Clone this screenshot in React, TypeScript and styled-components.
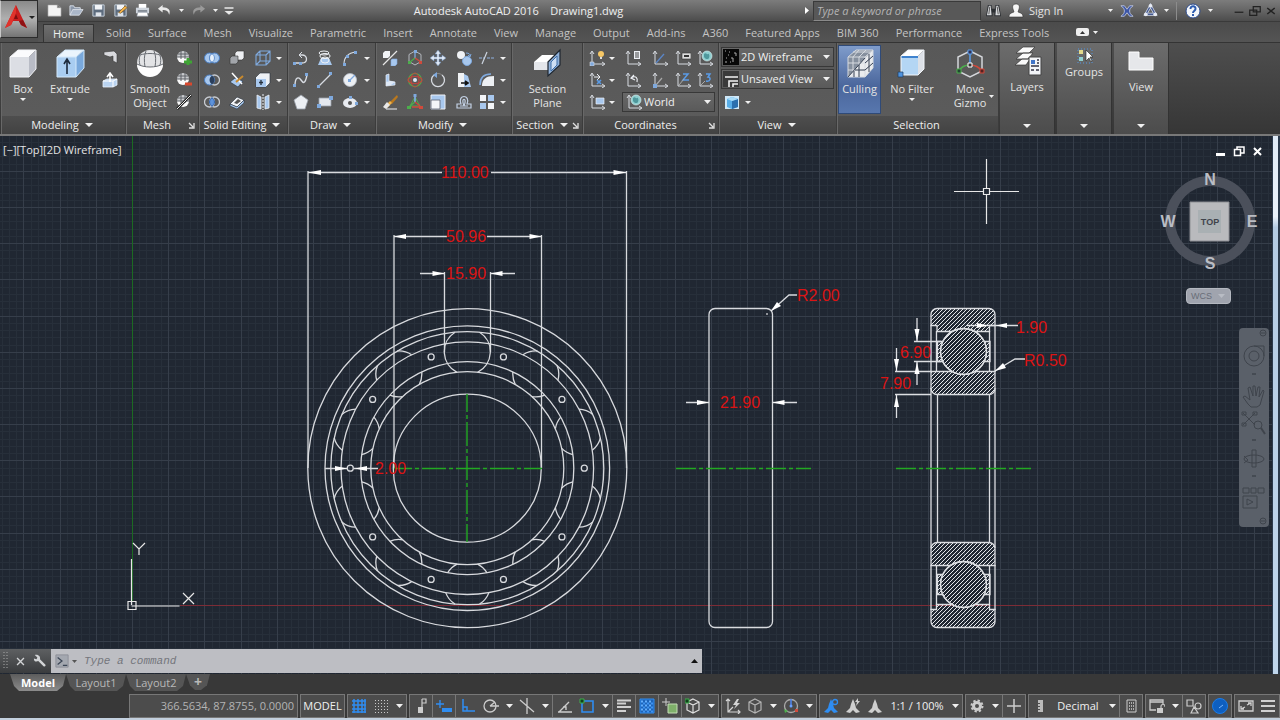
import React from "react";
import styled, { createGlobalStyle, css } from "styled-components";

const uiFont = `"Open Sans", "Noto Sans", sans-serif`;

const GlobalStyle = createGlobalStyle`
  *, *::before, *::after { box-sizing: border-box; }
  html, body { margin: 0; padding: 0; background: #383838; }
  body { font-family: ${uiFont}; font-size: 11px; line-height: 14px; color: #e4e4e4; }
  button, input, select { font: inherit; color: inherit; margin: 0; padding: 0; }
  button { background: none; border: 0; cursor: default; }
  svg { display: block; }
`;

/* ---------- icons ---------- */

const W = "#eef1f6";
const B = "#a8c8ee";
const S = "#7fa9dd";
const D = "#26303c";

const axes = <path d="M3 2v12h12M1 4l2-3 2 3M13 12l3 2-3 2" fill="none" stroke="#d8dce2" strokeWidth="1" />;
const mesh = (
  <>
    <path d="M1 7a6 6 0 0112 0z" fill="#c9cbce" />
    <path d="M1 7a6 6 0 0012 0z" fill="#fafafa" />
    <path d="M1 7h12M2 4h10M5 1v8M9 1v8" stroke="#5c6066" strokeWidth="1" fill="none" />
  </>
);
const person = <path d="M8 1l2 5 1 4 4 4-4 1-3-3-3 3-4-1 4-4 1-4z" fill="currentColor" />;

const art: Record<string, React.ReactNode> = {
  new: <path d="M1 2h10l4 3v9H1zM11 2v3h4" fill="#f4f4f4" stroke="#999" strokeWidth=".6" />,
  open: <><path d="M1 13V3h4l1 2h6v2" fill="#8a96a8" stroke="#d8dee8" /><path d="M1 13l3-6h11l-4 6z" fill="#aab6c8" stroke="#e6eaf0" strokeWidth=".8" /></>,
  save: <><path d="M2 2h12v12H2z" fill="#5d6c7e" stroke="#c9d2dd" /><path d="M4 2h8v5H4z" fill="#f2f4f7" /><path d="M5 10h6v4H5z" fill="#dfe4ea" /></>,
  saveas: <><path d="M2 2h12v12H2z" fill="#5d6c7e" stroke="#c9d2dd" /><path d="M4 2h8v5H4z" fill="#f2f4f7" /><path d="M5 10h6v4H5z" fill="#dfe4ea" /><path d="M6 10l7-7 2 2-7 6z" fill="#f3b24a" stroke="#6a4a14" strokeWidth=".6" /></>,
  plot: <><path d="M4 1h8v5H4z" fill="#fff" /><path d="M1 5h14v6H1z" fill="#cfd5dd" /><path d="M3 8h10v1H3z" fill="#39424e" /><path d="M3 10h10l1 4H2z" fill="#fff" stroke="#8c96a2" strokeWidth=".6" /></>,
  undo: <path d="M6 2L1 6l5 4V7.500c4 0 6 1 7 5 2-5-1-8-7-8z" fill="#e9e9e9" />,
  redo: <path d="M10 2l5 4-5 4V7.500c-4 0-6 1-7 5-2-5 1-8 7-8z" fill="#9a9a9a" />,
  custom: <path d="M2 3h12v2H2zM2 8h12l-6 5z" fill="#e9e9e9" />,
  binoc: <><path d="M2 2h4v4h4V2h4l2 12H9v-4H7v4H0z" fill="#2c2f33" /><path d="M3 3h2l1 10H1zM11 3h2l2 10h-5z" fill="#d8dadd" /><path d="M4 4l-1 8M12 4l1 8" stroke="#555" /></>,
  user: <path d="M8 1c3 0 4 2 3 5l-1 3c2 1 5 1 5 5H1c0-4 3-4 5-5L5 6C4 3 5 1 8 1z" fill="#f6f6f6" stroke="#333" strokeWidth=".6" />,
  exchange: <path d="M1 2h4l3 4 3-4h4c-3 2-4 4-4 6s1 4 4 6h-4l-3-4-3 4H1c3-2 4-4 4-6S4 4 1 2z" fill="#3d56a6" stroke="#c6cfe8" strokeWidth=".9" />,
  a360: <><path d="M8 3l5 9H3z" fill="none" stroke="#cdd6ea" strokeWidth="3" /><path d="M8 3l5 9H3z" fill="none" stroke="#44598f" strokeWidth="1.4" /><circle cx="8" cy="3" r="2" fill="#e7ebf4" /><circle cx="3" cy="12" r="2" fill="#e7ebf4" /><circle cx="13" cy="12" r="2" fill="#e7ebf4" /></>,
  help: <><circle cx="8" cy="8" r="7" fill="#f4f7fb" stroke="#2b4a8c" strokeWidth="1" /><path d="M5.500 6c0-4 5.500-3.500 5 0 0 1.500-2.500 2-2.500 4M8 11v2" fill="none" stroke="#2d5cb0" strokeWidth="2" /></>,
  min: <path d="M1 9h14v2H1z" fill="#222" />,
  restore: <path d="M6 3h8v6H6zM2 7h8v6H2z" fill="none" stroke="#222" strokeWidth="1.400" />,
  close: <path d="M3 4l10 8M13 4L3 12" stroke="#222" strokeWidth="2" />,

  polysolid: <path d="M2 2l10-1 3 3v9l-4-2V6L8 7 2 5z" fill="#d9dade" stroke="#3b3b3b" strokeWidth=".6" />,
  presspull: <><path d="M1 9l4-2h10v6l-4 2H1z" fill="#b9d3f0" stroke="#e9f1fa" strokeWidth=".8" /><path d="M1 9h10v6M11 9l4-2" stroke="#fff" fill="none" /><path d="M8 10V2M5 5l3-4 3 4" stroke="#fff" strokeWidth="1.600" fill="none" /></>,
  meshAdd: <>{mesh}<path d="M12 8v7M8 12h8" stroke="#3fa535" strokeWidth="3" /></>,
  meshSub: <>{mesh}<path d="M9 12h7" stroke="#d8482e" strokeWidth="3" /></>,
  meshNo: <>{mesh}<path d="M1 15L15 1" stroke="#222" strokeWidth="2.500" /><path d="M1 15L15 1" stroke="#eee" strokeWidth="1" /></>,
  union: <><circle cx="5.500" cy="8" r="5" fill={B} stroke="#4b7fc4" /><circle cx="10.500" cy="8" r="5" fill={B} stroke="#4b7fc4" /><path d="M8 3.700a5 5 0 010 8.600a5 5 0 010-8.600" fill="#e6f0fb" stroke="#4b7fc4" strokeWidth=".8" /></>,
  subtract: <><circle cx="10.500" cy="8" r="5" fill="none" stroke="#c8ccd2" strokeWidth="1.300" /><circle cx="5.500" cy="8" r="5" fill={B} stroke="#4b7fc4" /><path d="M8 3.700a5 5 0 010 8.600a5 5 0 010-8.600" fill="#2b3f5c" /></>,
  intersect: <><circle cx="5.500" cy="8" r="5" fill="none" stroke="#c8ccd2" strokeWidth="1.300" /><circle cx="10.500" cy="8" r="5" fill="none" stroke="#c8ccd2" strokeWidth="1.300" /><path d="M8 3.700a5 5 0 010 8.600a5 5 0 010-8.600" fill="#5e93db" stroke="#2e5fa8" /></>,
  interfere: <><path d="M6 3l2-2h7v7l-2 2H6z" fill="#eef0f3" stroke="#333" strokeWidth=".6" /><path d="M1 8l2-2h6v6l-2 2H1z" fill="#a2a5aa" stroke="#333" strokeWidth=".6" /></>,
  slice: <><path d="M1 10l5-4 8 3-5 6z" fill={B} stroke={D} strokeWidth=".6" /><path d="M3 1l10 11" stroke="#fff" strokeWidth="1.500" /><path d="M14 4L7 10" stroke="#c98a2d" strokeWidth="2" /></>,
  thicken: <><path d="M1 10l7-7 7 3-7 7z" fill="#f2f4f7" stroke={D} strokeWidth=".6" /><path d="M1 10l7 3 7-7v3l-7 6-7-3z" fill={B} stroke={D} strokeWidth=".6" /><path d="M5 9l4-4 3 2-4 3z" fill="#555" /></>,
  extractEdges: <path d="M1 5h10v10H1zM5 1h10v10H5zM1 5l4-4M11 5l4-4M1 15l4-4M11 15l4-4" fill="none" stroke={S} strokeWidth="1.100" />,
  extrudeFace: <><path d="M1 5l4-4h10v10l-4 4H1z" fill="#eef1f5" stroke={D} strokeWidth=".6" /><path d="M1 5h10v10H1z" fill={B} /><path d="M1 6h10" stroke="#fff" strokeWidth="1.500" /><path d="M6 8v5M4 10.500h4" stroke={D} strokeWidth="1.300" /></>,
  separate: <><path d="M2 1l4 2v12l-4-1zM14 1l-4 2v12l4-1z" fill={B} stroke={W} strokeWidth=".8" /><path d="M8 0v16" stroke={W} strokeDasharray="2 1" /></>,
  pline: <><path d="M2 13h7c6 0 6-8 0-8H7" fill="none" stroke="#d8dce2" strokeWidth="1.300" /><path d="M9 2L6 5l3 3" fill="none" stroke="#d8dce2" /><path d="M0 12h3v3H0zM6 12h3v3H6z" fill={S} /></>,
  spiral: <><path d="M1 15l3-7h8l3 7z" fill={B} /><ellipse cx="7" cy="3" rx="5" ry="2" fill="none" stroke={W} /><ellipse cx="8" cy="6" rx="5" ry="2.500" fill="none" stroke={W} /><ellipse cx="8" cy="10" rx="4" ry="3" fill="none" stroke={W} /></>,
  arc: <><path d="M2 14C2 7 6 3 14 2" fill="none" stroke="#d8dce2" strokeWidth="1.200" /><path d="M1 13h3v3H1zM4 5h3v3H4zM12 1h3v3h-3z" fill={S} /></>,
  spline: <><path d="M2 14C2 4 6 5 8 8s4 5 6-5" fill="none" stroke="#d8dce2" strokeWidth="1.400" /><path d="M0 12h3v3H0zM12 1h3v3h-3z" fill={S} /></>,
  line: <><path d="M2 14L14 2" stroke="#d8dce2" strokeWidth="1.200" /><path d="M0 13h3v3H0zM12 0h3v3h-3z" fill={S} /></>,
  circle: <><circle cx="8" cy="8" r="6.500" fill="#eceff3" stroke="#b8bec8" strokeWidth=".8" /><path d="M8 8l5-5" stroke={S} strokeWidth="1.200" /><path d="M6 7h3v3H6z" fill={S} /></>,
  polygon: <path d="M8 1l7 5-3 9H4L1 6z" fill="#eceff3" stroke="#9aa1ab" strokeWidth=".8" />,
  rect: <><path d="M2 4h12v8H2z" fill="#e4e8ee" stroke="#9aa1ab" strokeWidth=".8" /><path d="M0 10h4v4H0zM12 2h4v4h-4z" fill={S} /></>,
  ellipse: <><ellipse cx="8" cy="9" rx="7" ry="5" fill="#e8ebf0" /><circle cx="8" cy="9" r="2" fill="#555" /><path d="M7 2h3v3H7zM13 8h3v3h-3z" fill={S} /></>,
  convert: <><path d="M1 15L15 1" stroke="#e6e6e6" strokeWidth="1.200" /><path d="M1 3l2-2h5v5L6 8H1z" fill="#f2f4f7" /><path d="M9 10l1-1h5v5l-2 2H9z" fill={B} stroke={S} strokeWidth=".6" /></>,
  gizmo: <><path d="M8 1l6 3.500v7L8 15l-6-3.500v-7z" fill="none" stroke="#b4b8be" strokeWidth="1" /><path d="M8 8V2" stroke={S} strokeWidth="1.300" /><path d="M8 8l-5 4" stroke="#4cae4c" strokeWidth="1.300" /><path d="M8 8l6 4" stroke="#d04a3c" strokeWidth="1.500" /><path d="M7 0h3v3H7z" fill={S} /><path d="M1 11h3v3H1z" fill="#4cae4c" /><path d="M12 11h3v3h-3z" fill="#d04a3c" /></>,
  move: <path d="M8 0l3 4H9v3h3V5l4 3-4 3V9H9v3h2l-3 4-3-4h2V9H4v2L0 8l4-3v2h3V4H5z" fill="#dfe9f6" stroke="#6e8fb8" strokeWidth=".5" />,
  copy: <><circle cx="5" cy="5" r="4" fill="#f0f2f5" /><circle cx="11" cy="11" r="4.500" fill={B} stroke={S} /><path d="M10 3c3 0 4 1 4 3M12 5l2 2 1-3" stroke={S} fill="none" /></>,
  trim: <><path d="M0 8h6M8 8h8" stroke="#8fb2e0" strokeWidth="1.200" strokeDasharray="3 1" /><path d="M3 14L8 2" stroke="#cdd5e0" strokeWidth="1.200" /></>,
  solidL: <><path d="M4 3l3-1v7l6 1v3l-9 1z" fill={B} stroke={W} strokeWidth=".7" /><path d="M4 10l4-1 5 1-4 3-5 1z" fill="#dfe9f6" /></>,
  rotate3d: <><circle cx="8" cy="8" r="6.500" fill="none" stroke="#4cae4c" strokeWidth="1.200" /><ellipse cx="8" cy="8" rx="7" ry="3.500" fill="none" stroke="#c4473c" strokeWidth="1.200" /><ellipse cx="8" cy="8" rx="4" ry="7" fill="none" stroke="#c4473c" strokeWidth="1" /><circle cx="8" cy="8" r="2" fill="#dfe9f6" /></>,
  rotate: <><path d="M4 3a6.500 6.500 0 108 0" fill="none" stroke="#d8dce2" strokeWidth="1.300" /><path d="M4 3a6 6 0 018 0" fill="none" stroke="#888" /><path d="M7 0L3 3l4 3z" fill={S} /></>,
  mirror: <><path d="M2 1h6v14H2z" fill="#f0f2f5" /><path d="M8 2l4 2 3 11H8z" fill={B} /><path d="M5 11h6M9 9l3 2-3 2" stroke="#111" strokeWidth="1.600" fill="none" /></>,
  fillet: <><path d="M3 14C3 7 7 4 15 4v10z" fill="#eceff3" /><path d="M1 13C1 5 5 2 12 2" fill="none" stroke={S} strokeWidth="1.600" /></>,
  erase: <><path d="M15 1L8 8l2 2 6-7z" fill="#b9781e" /><path d="M8 7l-6 6 3 1 5-5z" fill="#f0b44c" /><path d="M5 8l3 3-4 4-3-2z" fill="#e8e8e8" /><path d="M4 15h11" stroke={W} /></>,
  scale3d: <><path d="M8 3l-5 9h10z" fill="none" stroke="#4cae4c" strokeWidth="1" /><path d="M8 1v7" stroke={S} strokeWidth="1.800" /><path d="M8 8l-5 4" stroke="#4cae4c" strokeWidth="1.500" /><path d="M8 8l5 4M5 13h8" stroke="#d04a3c" strokeWidth="1.300" /><path d="M12 12h4v3h-4z" fill="#d04a3c" /><path d="M0 12h4v3H0z" fill="#4cae4c" /><path d="M6.500 0h3v3h-3z" fill={S} /></>,
  scale: <><path d="M1 1h14v14H1z" fill={B} stroke={W} /><path d="M1 6h9v9H1z" fill="#f5f6f8" stroke="#586170" strokeWidth=".8" /></>,
  offset: <path d="M1 14v-4h4C1 0 15 0 11 10h4v4zM4 12h4C4 3 12 3 8 12h4" fill="none" stroke="#c4d2e6" strokeWidth="1.200" />,
  array: <><path d="M1 1h6v6H1zM9 9h6v6H9z" fill="#f3f5f8" /><path d="M9 1h6v6H9zM1 9h6v6H1z" fill={B} /></>,

  ucs: <>{axes}<path d="M1 12h4v4H1z" fill={S} stroke="#d8dce2" strokeWidth=".6" /><circle cx="12" cy="4" r="3" fill="#f6c765" /><path d="M11 7h2v2h-2z" fill="#ddd" /></>,
  ucsX: <>{axes}<path d="M5 5h5M8 2l3 3-3 3" stroke={W} fill="none" /><path d="M8 8l4 4M12 8l-4 4" stroke="#5a9be6" strokeWidth="1.600" /></>,
  ucsView: <>{axes}<path d="M7 4h8v6H7z" fill={B} stroke={W} strokeWidth=".7" /></>,
  ucsNamed: <>{axes}<path d="M9 1h6v8H9z" fill={W} /><path d="M10 3h4M10 5h4M10 7h4" stroke="#444" /></>,
  ucsPrev: <>{axes}<path d="M6 6c5-3 7 0 6 4M9 3L6 6l4 2" stroke={W} fill="none" strokeWidth="1.200" /></>,
  ucsOrigin: <>{axes}<path d="M4 13l8-9" stroke="#5a86c8" strokeWidth="1.300" /></>,
  ucsObj: <>{axes}<path d="M4 13l6-7" stroke="#aaa" strokeWidth="1.200" /><path d="M1 12h4v4H1z" fill={S} /></>,
  ucsFace: <>{axes}<path d="M7 3h9v6H7z" fill="#ddd" stroke="#333" strokeWidth=".6" /><path d="M9 6h5" stroke="#333" strokeWidth="2" /></>,
  ucsZ: <>{axes}<path d="M8 2h5L8 8h6" stroke="#5a9be6" fill="none" strokeWidth="1.500" /><path d="M4 13l5-6" stroke="#aaa" /></>,
  world: <>{axes}<circle cx="10" cy="6" r="5" fill="#8fcfd0" stroke="#dff2f2" strokeWidth=".6" /><path d="M7 4c2-2 3 1 4 0s2 2 1 4-4 1-5-1z" fill="#4f989c" /></>,
  ucs3: <>{axes}<path d="M9 2h4l-2 3c3 0 3 5-2 4" stroke="#5a9be6" fill="none" strokeWidth="1.500" /><path d="M4 13l4-4" stroke="#aaa" /></>,
  wire: <><path d="M0 0h16v16H0z" fill="#080808" /><path d="M2 2h1M6 3h1M5 6h1M3 9h1M8 9h2v4M11 4h2v3M2 13h2M7 13h1" stroke="#aaa" fill="none" /></>,
  viewIco: <><path d="M0 0h16v16H0z" fill="#3a3a3a" /><path d="M2 6h13M6 16v-6h9M10 16v-3h5" stroke="#f2f2f2" strokeWidth="1.600" fill="none" /></>,
  viewCube: <><path d="M1 2h14v13H1z" fill="#cfe8f8" /><path d="M3 5l5-2 6 2v8l-6 2-5-2z" fill="#58aee8" /><path d="M8 7l6-2v8l-6 2z" fill="#2b6fae" /><path d="M3 5l5 2 6-2-6-2z" fill="#a9dcf8" /></>,

  dgrid: <path d="M3 1v14M7 1v14M11 1v14M14 1v14M1 3h14M1 7h14M1 11h14M1 14h14" stroke="#2f8df2" strokeWidth="1.500" />,
  dots: <path d="M2 2.500h13M2 5.500h13M2 8.500h13M2 11.500h13M2 14.500h13" stroke="#c9c9c9" strokeWidth="1" strokeDasharray="1 2" />,
  infer: <><path d="M9 1h4v4H9V1v8" fill="none" stroke="#ccc" strokeWidth="1.200" /><path d="M5 9h5v6H5z" fill="#ccc" /></>,
  dyn: <><path d="M4 2v8M0 6h8" stroke="#2f8df2" strokeWidth="1.400" /><path d="M6 10h10v4H6z" fill="#2f8df2" /></>,
  ortho: <path d="M3 1v12h12M3 9h4v4" fill="none" stroke="#2f8df2" strokeWidth="1.500" />,
  polar: <><circle cx="7" cy="8" r="6" fill="none" stroke="#ccc" strokeWidth="1.300" /><path d="M7 8h9M7 8l5-4" stroke="#ccc" strokeWidth="1.300" /></>,
  iso: <path d="M1 2l14 12M8 0v16M1 2l7 6" stroke="#ccc" strokeWidth="1.300" />,
  otrack: <path d="M1 14h14M2 14L12 4M6 9h3v3" stroke="#ccc" strokeWidth="1.400" fill="none" />,
  osnap: <><path d="M3 3h11v11H3z" fill="none" stroke="#2f8df2" strokeWidth="1.600" /><path d="M1 1h4v4H1z" fill="#12401c" stroke="#3fae4c" /></>,
  lwt: <path d="M1 2.500h14M1 5.500h9M1 9h14M1 13h9" stroke="#d0d0d0" strokeWidth="2" />,
  transp: <><path d="M1 1h14v14H1z" fill="#1d63b8" stroke="#2f8df2" /><path d="M2 3.500h12M2 7.500h12M2 11.500h12" stroke="#63aefc" strokeDasharray="2 2" strokeWidth="2" /><path d="M4 5.500h10M4 9.500h10M4 13.500h10" stroke="#3f93f0" strokeDasharray="2 2" strokeWidth="2" /></>,
  cycle: <><path d="M6 6h9v9H6z" fill="#7fb06a" stroke="#c4dcb6" /><path d="M4 0v8M0 4h8" stroke="#ccc" /></>,
  cube: <path d="M8 1l6 3v8l-6 3-6-3V4zM2 4l6 3 6-3M8 7v8" fill="none" stroke="#b4b4b4" strokeWidth="1.200" />,
  cubeSnap: <><path d="M8 1l6 3v8l-6 3-6-3V4zM2 4l6 3 6-3M8 7v8" fill="none" stroke="#e0e0e0" strokeWidth="1.200" /><path d="M0 1h4v4H0z" fill="#12401c" stroke="#3fae4c" /></>,
  dynUcs: <><path d="M3 1v13h12M1 3l2-2 2 2M13 12l2 2-2 2M3 14l5-5" fill="none" stroke="#d4d4d4" strokeWidth="1.200" /><path d="M12 1L8 7h3l-2 4 6-6h-3l2-4z" fill="#d4d4d4" /></>,
  gizmoS: <><circle cx="8" cy="8" r="6.500" fill="none" stroke="#aaa" strokeWidth="1.300" /><path d="M8 1v7" stroke="#4f83e8" strokeWidth="1.600" /><circle cx="8" cy="8" r="1.500" fill="#6aa0ff" /><path d="M1 11l4 2-3 2z" fill="#4cae4c" /><path d="M12 11h3v3h-3z" fill="#d04a3c" /></>,
  person: person,
  personB: <>{person}<circle cx="12" cy="4" r="2.500" fill="none" stroke="currentColor" strokeWidth="1.300" /></>,
  personF: <>{person}<path d="M13 0l-3 4h2l-1 4 4-5h-2z" fill="currentColor" /></>,
  gear: <><circle cx="8" cy="8" r="5.500" fill="none" stroke="#ccc" strokeWidth="2" strokeDasharray="2.300 2" /><circle cx="8" cy="8" r="3.500" fill="none" stroke="#ccc" strokeWidth="3" /></>,
  plus: <path d="M8 1v14M1 8h14" stroke="#ccc" strokeWidth="1.500" />,
  ruler: <path d="M6 2h5v12H6v-2h2v-1H6V9h2V8H6V6h2V5H6z" fill="#bbb" />,
  calc: <><path d="M4 2h9v12H4z" fill="none" stroke="#ccc" /><path d="M6 5h6M6 8h6M6 11h6" stroke="#ccc" strokeDasharray="1 1" strokeWidth="1.500" /></>,
  lock: <><path d="M7 12H1V2h13v4M1 4h13" fill="none" stroke="#ccc" strokeWidth="1.300" /><path d="M8 10h6v5H8z" fill="#ccc" /><path d="M12 10V8c0-2 4-2 4 0v1" stroke="#ccc" fill="none" strokeWidth="1.200" /></>,
  shapes: <><path d="M1 2h6v6H1zM5 15l3-6 4 6z" fill="none" stroke="#ccc" strokeWidth="1.200" /><circle cx="12" cy="8" r="3" fill="none" stroke="#ccc" strokeWidth="1.200" /></>,
  perf: <><circle cx="8" cy="8" r="7.500" fill="#0e5fc0" stroke="#1b7ce8" /><path d="M7 10l4-3" stroke="#7ab8ff" /></>,
  full: <path d="M1 3h14v10H1zM9 7l4-2M13 8V5h-3M7 9l-4 2M3 8v3h3" fill="none" stroke="#d0d0d0" strokeWidth="1.300" />,
  burger: <path d="M1 3h14M1 8h14M1 13h14" stroke="#d0d0d0" strokeWidth="1.800" />,
  wrench: <path d="M2 1l3 3-1 2-3-1c0 4 3 4 5 3l6 6c2 1 3-1 2-2L8 6c1-4-3-6-6-5z" fill="#d2d4d6" />,
  x: <path d="M3 3l10 10M13 3L3 13" stroke="#d2d4d6" strokeWidth="2" />,
  prompt: <><path d="M1 1h14v14H1z" fill="#a4a8b0" stroke="#8a8e96" /><path d="M3 4l5 4-5 4M9 13h5" fill="none" stroke="#3c4656" strokeWidth="1.400" /></>,
};

const Icon = ({ name, size = 16 }: { name: string; size?: number }) => (
  <svg width={size} height={size} viewBox="0 0 16 16" aria-hidden="true">{art[name]}</svg>
);

const Tri = ({ size = 7, color = "#f0f0f0" }: { size?: number; color?: string }) => (
  <svg width={size} height={Math.ceil(size / 2)} viewBox="0 0 8 4" preserveAspectRatio="none" aria-hidden="true">
    <path d="M0 0h8L4 4z" fill={color} />
  </svg>
);

const Launcher = () => (
  <svg width="8" height="8" viewBox="0 0 8 8" aria-hidden="true">
    <path d="M2 2l4 4M7 2v5H2" fill="none" stroke="#e0e0e0" strokeWidth="1.300" />
  </svg>
);

const bigArt: Record<string, React.ReactNode> = {
  box: <><path d="M2 9l8-7h18l-7 7z" fill="#fbfbfd" /><path d="M2 9h19v20H2z" fill="#dcdee4" /><path d="M21 9l7-7v19l-7 8z" fill="#b9bcc6" /><path d="M2 9l8-7h18v19l-7 8H2z" fill="none" stroke="#f2f3f6" /></>,
  extrude: <><path d="M2 9l8-7h19l-8 7z" fill="#eaf4fd" /><path d="M2 9h19v20H2z" fill="#a9cdf1" /><path d="M21 9l8-7v18l-8 9z" fill="#7aa9dc" /><path d="M2 9l8-7h19v18l-8 9H2zM2 9h19v20M21 9l8-7" fill="none" stroke="#d3e8fa" /><path d="M12 26V13M9 16l3-5 3 5" stroke="#1c2a3c" strokeWidth="1.600" fill="none" /></>,
  sphere: <><circle cx="15" cy="15" r="13" fill="#e2e3e5" /><path d="M2 16c7 4 19 4 26 0a13 13 0 01-26 0" fill="#fdfdfd" /><path d="M5 7c6-2 14-2 20 0M2 16c7 4 19 4 26 0M11 3c-2 4-2 10-1 16M19 3c2 4 2 10 1 16M5 7c-1 4-1 7 0 10M25 7c1 4 1 7 0 10" stroke="#686c72" fill="none" /></>,
  plane: <><path d="M1 14l8-7h14l-8 7z" fill="#fff" /><path d="M1 14h14v8H1z" fill="#e4e6ea" /><path d="M15 14L27 2v15L15 28z" fill="#8fb0d8" stroke="#1e2630" strokeWidth="1.200" /><path d="M18 14l6-6v9l-6 6z" fill="#cfe0f4" stroke="#3e6ea8" /></>,
  culling: <><path d="M3 9l8-7h17v18l-8 9H3z" fill="#86909e" /><path d="M3 29L20 10v19zM20 10l8-8v18l-8 9z" fill="#e9ebee" /><path d="M3 9h17v20M3 9l8-7h17v18l-8 9H3V9M20 9l8-7M3 15h17l8-7M3 22h17l8-7M8 9v20M14 9v20M8 4h18M14 2L8 9M21 2l-7 7" stroke="#d6dae0" fill="none" /><path d="M3 29L20 10M9 23v6M14 17v12M10 22h10M20 15l8-7M20 22l8-7M24 6v18" stroke="#3a4456" fill="none" /></>,
  filter: <><path d="M4 8l7-6h16l-6 6z" fill="#fff" /><path d="M4 8h17v19H4z" fill="#b4d6f4" /><path d="M21 8l6-6v19l-6 6z" fill="#dde1e7" /><path d="M4 9h17" stroke="#3f83cf" strokeWidth="2" /><path d="M4 8l7-6h16v19l-6 6H4z" fill="none" stroke="#f2f6fa" /><path d="M1 24h5v5H1z" fill="#4f93de" stroke="#1e3c60" strokeWidth=".7" /></>,
  gizmo: <><path d="M15 3l12 6v14l-12 6-12-6V9z" fill="none" stroke="#d4d6da" strokeWidth="1.500" /><path d="M15 16V4" stroke="#5a9be6" strokeWidth="1.600" /><path d="M15 17c-5 0-9 2-11 6" stroke="#4cae4c" strokeWidth="1.600" fill="none" /><path d="M15 17c5 0 9 2 12 6" stroke="#d04a3c" strokeWidth="1.600" fill="none" /><path d="M13 2h4v4h-4z" fill="#335" stroke="#5a9be6" /><path d="M2 21h4v4H2z" fill="#243" stroke="#4cae4c" /><path d="M25 21h4v4h-4z" fill="#522" stroke="#d04a3c" /><path d="M13 15h4v4h-4z" fill="#333" stroke="#fff" /></>,
  layers: <><path d="M4 7l7-6h12l-6 6zM4 13l7-6h10l-5 6zM3 19l7-6h8l-4 6z" fill="#fafafa" stroke="#333" strokeWidth=".7" /><path d="M17 11h12v18H17z" fill="#f2f4f7" stroke="#444" /><path d="M19 14h4v4h-4z" fill="#3f74c8" /><path d="M25 14h2M25 17h2M19 20h8M19 24h3M24 24h3" stroke="#334" strokeWidth="1.500" /></>,
  groups: <><path d="M9 3h14v14H9z" fill="none" stroke="#5b86b8" strokeDasharray="1 2" strokeWidth="1.500" /><path d="M10 4h4v4h-4z" fill="#e3d98a" /><path d="M10 11h4v4h-4z" fill="#8fd0d0" /><path d="M17 4v11l3-3 2 4 1-1-2-4h3z" fill="#fff" stroke="#222" strokeWidth=".6" /></>,
  view: <path d="M3 6h10v6h14v12H3z" fill="#e6e7ea" stroke="#fff" />,
};
const Big = ({ name }: { name: string }) => (
  <svg width="30" height="30" viewBox="0 0 30 30" aria-hidden="true">{bigArt[name]}</svg>
);

/* ---------- shell ---------- */

const Shell = styled.div`
  display: flex;
  flex-direction: column;
  min-height: 100vh;
`;

const Header = styled.header`
  display: flex;
  height: 42px;
  background: #505050;
`;

const LogoButton = styled.button`
  display: flex;
  align-items: center;
  justify-content: space-between;
  width: 38px;
  height: 38px;
  padding: 0 2px 4px 4px;
  background: linear-gradient(#8a8a8a, #b0b0b0 50%, #747474);
  border: 1px solid #2c2c2c;
  border-left-color: #c8c8c8;
`;

const HeaderMain = styled.div`
  display: flex;
  flex-direction: column;
  flex: 1;
  min-width: 0;
`;

const TitleBar = styled.div`
  display: flex;
  align-items: center;
  height: 22px;
  background: linear-gradient(#7c7c7c, #656565 50%, #4c4c4c);
  border-bottom: 1px solid #3a3a3a;
`;

const QuickAccess = styled.div`
  display: flex;
  padding-left: 5px;
`;

const ToolButton = styled.button<{ $w?: number }>`
  display: flex;
  align-items: center;
  justify-content: center;
  flex: none;
  width: ${(p) => p.$w ?? 22}px;
  height: 20px;
`;

const Title = styled.h1`
  flex: 1;
  margin: 0;
  font-size: 11px;
  font-weight: 400;
  text-align: center;
  white-space: pre;
  color: #f0f0f0;
`;

const SearchBox = styled.input`
  width: 168px;
  height: 20px;
  padding: 0 3px;
  background: #585858;
  border: 1px solid #3a3a3a;
  border-bottom-color: #8a8a8a;
  font-style: italic;
  &::placeholder { color: #b4b4b4; opacity: 1; }
`;

const TitleTools = styled.div`
  display: flex;
  align-items: center;
  padding-left: 1px;
`;

const WindowTools = styled.div`
  display: flex;
  padding-left: 14px;
`;

const SignIn = styled.button`
  width: 77px;
  height: 20px;
  padding-left: 1px;
  text-align: left;
`;

const Separator = styled.span`
  width: 1px;
  height: 18px;
  margin: 0 5px;
  background: #8c8c8c;
`;

const TabBar = styled.nav`
  display: flex;
  height: 20px;
  padding: 2px 0 0 5px;
  background: linear-gradient(#4b4b4b, #545454);
`;

const Tab = styled.button<{ $active?: boolean }>`
  height: 18px;
  padding: 0 9px 0 8px;
  white-space: nowrap;
  color: #c4c4c4;
  ${(p) =>
    p.$active &&
    css`
      padding: 0 9px;
      margin-right: 4px;
      color: #eee;
      background: linear-gradient(#6e6e6e, #5a5a5a);
      border: 1px solid #343434;
      border-bottom: 0;
    `}
`;

const CollapseButton = styled.button`
  display: flex;
  align-items: center;
  gap: 4px;
  height: 16px;
  margin-left: 18px;
`;

/* ---------- ribbon ---------- */

const Ribbon = styled.section`
  display: flex;
  height: 94px;
  padding-left: 1px;
  background: linear-gradient(#4e4e4e, #363636);
  border-top: 1px solid #343434;
  border-bottom: 2px solid #787878;
`;

const PanelBox = styled.section<{ $w: number }>`
  display: flex;
  flex-direction: column;
  flex: none;
  width: ${(p) => p.$w}px;
  background: linear-gradient(#585858, #5c5c5c);
  border-right: 1px solid #3c3c3c;
  border-left: 1px solid #686868;
`;

const PanelBody = styled.div<{ $pad?: number }>`
  display: flex;
  flex: 1;
  padding-left: ${(p) => p.$pad ?? 0}px;
`;

const PanelTitle = styled.div`
  display: flex;
  align-items: center;
  height: 18px;
  padding-right: 3px;
  background: linear-gradient(#4e4e4e, #424242);
  color: #eee;
`;

const PanelName = styled.button`
  display: flex;
  flex: 1;
  align-items: center;
  justify-content: center;
  gap: 6px;
  white-space: nowrap;
`;

const BigButton = styled.button<{ $w: number; $active?: boolean }>`
  position: relative;
  display: flex;
  flex-direction: column;
  align-items: center;
  flex: none;
  width: ${(p) => p.$w}px;
  height: 67px;
  margin-top: 3px;
  white-space: nowrap;
  ${(p) =>
    p.$active &&
    css`
      background: linear-gradient(#7f9ccb, #4a669c 60%, #5877ae);
      box-shadow: 0 0 0 1px #2f4a78;
    `}
`;

const BigIcon = styled.span`
  display: block;
  height: 36px;
  padding-top: 2px;
`;

const CornerDrop = styled.span`
  position: absolute;
  right: 2px;
  bottom: 15px;
`;

const DropGap = styled.span`
  padding-top: 2px;
`;

const ToolGrid = styled.div<{ $cols: string }>`
  display: grid;
  grid-template-columns: ${(p) => p.$cols};
  grid-auto-rows: 22px;
  align-content: start;
  padding-top: 4px;
`;

const GridButton = styled.button`
  display: flex;
  align-items: center;
  justify-content: center;
`;

const SelectField = styled.label`
  position: relative;
  display: flex;
  align-items: center;
  flex: none;
  height: 20px;
  padding-left: 1px;
  background: linear-gradient(#686868, #5a5a5a);
  border: 1px solid #383838;
`;

const WorldField = styled(SelectField)`
  grid-column: 3 / 7;
  margin: 1px 1px 0 5px;
  padding-left: 3px;
`;

const SelectInput = styled.select`
  flex: 1;
  min-width: 0;
  height: 18px;
  padding-left: 2px;
  appearance: none;
  background: transparent;
  border: 0;
  color: #f0f0f0;
`;

const SelectArrow = styled.span`
  position: absolute;
  right: 3px;
  pointer-events: none;
`;

const ViewColumn = styled.div`
  display: flex;
  flex-direction: column;
  flex: 1;
  gap: 2px;
  padding: 4px 2px 0 1px;
`;

const IconRow = styled.div`
  display: flex;
  align-items: center;
  height: 22px;
`;

const SlimPanel = styled.button`
  display: flex;
  flex-direction: column;
  align-items: center;
  flex: none;
  width: 55px;
  margin-left: 1px;
  margin-right: 1px;
  padding: 3px 0 6px;
  background: linear-gradient(#6c6c6c, #4c4c4c);
  border-right: 1px solid #333;
`;

const SlimIcon = styled.span<{ $short?: boolean }>`
  height: ${(p) => (p.$short ? 19 : 34)}px;
`;

const SlimLabel = styled.span`
  flex: 1;
`;

interface PanelProps {
  title: string;
  width: number;
  pad?: number;
  drop?: boolean;
  launcher?: boolean;
  children: React.ReactNode;
}
const Panel = ({ title, width, pad, drop, launcher, children }: PanelProps) => (
  <PanelBox $w={width} aria-label={title}>
    <PanelBody $pad={pad}>{children}</PanelBody>
    <PanelTitle>
      <PanelName>{title}{drop && <Tri size={8} />}</PanelName>
      {launcher && <button aria-label={`${title} settings`}><Launcher /></button>}
    </PanelTitle>
  </PanelBox>
);

const Tools = ({ cols, items, children }: { cols: string; items: string[]; children?: React.ReactNode }) => (
  <ToolGrid $cols={cols}>
    {items.map((n, i) => (
      <GridButton key={i} aria-label={n === "v" ? "More" : n}>{n === "v" ? <Tri size={6} /> : <Icon name={n} />}</GridButton>
    ))}
    {children}
  </ToolGrid>
);

const RibbonView = () => (
  <Ribbon>
    <Panel title="Modeling" width={125} drop>
      <BigButton $w={42}><BigIcon><Big name="box" /></BigIcon>Box<DropGap><Tri size={6} /></DropGap></BigButton>
      <BigButton $w={52}><BigIcon><Big name="extrude" /></BigIcon>Extrude<DropGap><Tri size={6} /></DropGap></BigButton>
      <Tools cols="28px" items={["polysolid", "presspull"]} />
    </Panel>
    <Panel title="Mesh" width={73} launcher>
      <BigButton $w={46}><BigIcon><Big name="sphere" /></BigIcon><span>Smooth<br />Object</span></BigButton>
      <Tools cols="22px" items={["meshAdd", "meshSub", "meshNo"]} />
    </Panel>
    <Panel title="Solid Editing" width={89} drop>
      <Tools cols="24px 26px 25px 8px" items={["union", "interfere", "extractEdges", "v", "subtract", "slice", "extrudeFace", "v", "intersect", "thicken", "separate", "v"]} />
    </Panel>
    <Panel title="Draw" width={88} drop pad={1}>
      <Tools cols="22px 26px 24px 10px" items={["pline", "spiral", "arc", "v", "spline", "line", "circle", "v", "polygon", "rect", "ellipse", "v"]} />
    </Panel>
    <Panel title="Modify" width={136} drop>
      <Tools cols="25px 25px 22px 29px 18px 14px" items={["convert", "gizmo", "move", "copy", "trim", "v", "solidL", "rotate3d", "rotate", "mirror", "fillet", "v", "erase", "scale3d", "scale", "offset", "array", "v"]} />
    </Panel>
    <Panel title="Section" width={71} drop launcher>
      <BigButton $w={69}><BigIcon><Big name="plane" /></BigIcon><span>Section<br />Plane</span></BigButton>
    </Panel>
    <Panel title="Coordinates" width={136} launcher pad={4}>
      <Tools cols="18px 11px 32px 22px 23px 22px" items={["ucs", "v", "ucsNamed", "ucsOrigin", "ucsFace", "world", "ucsX", "v", "ucsPrev", "ucsObj", "ucsZ", "ucs3", "ucsView", "v"]}>
        <WorldField>
          <Icon name="world" />
          <SelectInput aria-label="Coordinate system" defaultValue="World"><option>World</option></SelectInput>
          <SelectArrow><Tri /></SelectArrow>
        </WorldField>
      </Tools>
    </Panel>
    <Panel title="View" width={118} drop>
      <ViewColumn>
        <SelectField>
          <Icon name="wire" />
          <SelectInput aria-label="Visual style" defaultValue="2D Wireframe"><option>2D Wireframe</option></SelectInput>
          <SelectArrow><Tri /></SelectArrow>
        </SelectField>
        <SelectField>
          <Icon name="viewIco" />
          <SelectInput aria-label="Named view" defaultValue="Unsaved View"><option>Unsaved View</option></SelectInput>
          <SelectArrow><Tri /></SelectArrow>
        </SelectField>
        <IconRow>
          <ToolButton aria-label="Viewport"><Icon name="viewCube" /></ToolButton>
          <ToolButton $w={10} aria-label="More"><Tri size={6} /></ToolButton>
        </IconRow>
      </ViewColumn>
    </Panel>
    <Panel title="Selection" width={162} pad={1}>
      <BigButton $w={41} $active><BigIcon><Big name="culling" /></BigIcon>Culling</BigButton>
      <BigButton $w={64}><BigIcon><Big name="filter" /></BigIcon>No Filter<DropGap><Tri size={6} /></DropGap></BigButton>
      <BigButton $w={52}><BigIcon><Big name="gizmo" /></BigIcon><span>Move<br />Gizmo</span><CornerDrop><Tri size={5} /></CornerDrop></BigButton>
    </Panel>
    <SlimPanel><SlimIcon><Big name="layers" /></SlimIcon><SlimLabel>Layers</SlimLabel><Tri size={8} /></SlimPanel>
    <SlimPanel><SlimIcon $short><Big name="groups" /></SlimIcon><SlimLabel>Groups</SlimLabel><Tri size={8} /></SlimPanel>
    <SlimPanel><SlimIcon><Big name="view" /></SlimIcon><SlimLabel>View</SlimLabel><Tri size={8} /></SlimPanel>
  </Ribbon>
);

/* ---------- drawing ---------- */

const GRID = 36.18;
const gridLines = (() => {
  const major: string[] = [];
  const minor: string[] = [];
  for (let i = -25; i < 165; i++) {
    const x = Math.round(132 + (i * GRID) / 5);
    (i % 5 === 0 ? major : minor).push(`M${x}.5 130v560`);
  }
  for (let i = -70; i < 20; i++) {
    const y = Math.round(605 + (i * GRID) / 5);
    (i % 5 === 0 ? major : minor).push(`M-40 ${y}.5h1400`);
  }
  return { major: major.join(""), minor: minor.join("") };
})();

const C = { x: 467.3, y: 468.2 };
const PITCH = 116.5;
const BALL = 23;
const at = (r: number, a: number) => `${(C.x + r * Math.cos(a)).toFixed(1)} ${(C.y + r * Math.sin(a)).toFixed(1)}`;
const spread = (r: number) => Math.acos((PITCH * PITCH + r * r - BALL * BALL) / (2 * PITCH * r));

const ballArcs = Array.from({ length: 10 }, (_, k) => {
  const a = ((18 + 36 * k) * Math.PI) / 180;
  const pairs = k === 7 ? [[136.5, 96.5]] : [[136.5, 126.3], [106.5, 96.5]];
  return pairs
    .map(([o, i]) =>
      `M${at(o, a - spread(o))}A${BALL} ${BALL} 0 0 0 ${at(i, a - spread(i))}` +
      `M${at(o, a + spread(o))}A${BALL} ${BALL} 0 0 1 ${at(i, a + spread(i))}`)
    .join("");
}).join("");

type Dir = "l" | "r" | "u" | "d";
const Arrow = ({ x, y, dir, n = 12 }: { x: number; y: number; dir: Dir; n?: number }) => {
  const rot = { r: 0, d: 90, l: 180, u: 270 }[dir];
  return <path d={`M0 0l${-n} -2.5v5z`} fill="#fff" stroke="none" transform={`translate(${x} ${y}) rotate(${rot})`} />;
};
const Dim = ({ x, y, children }: { x: number; y: number; children: string }) => (
  <text x={x} y={y} fill="#dc1414" stroke="none" fontFamily="'Liberation Sans', Arial, sans-serif" fontSize="16">{children}</text>
);

const DrawingSvg = styled.svg`
  position: absolute;
  inset: 0;
  width: 100%;
  height: 100%;
`;

const Drawing = () => (
  <DrawingSvg viewBox="0 136 1272 538" preserveAspectRatio="xMidYMid slice" role="img" aria-label="Ball bearing drawing">
    <defs>
      <pattern id="hatch" width="4" height="4" patternUnits="userSpaceOnUse">
        <path d="M-1 1L1 -1M0 4L4 0M3 5L5 3" stroke="#e4e6ea" strokeWidth="1" />
      </pattern>
    </defs>
    <path d={gridLines.minor} stroke="#272f3a" shapeRendering="crispEdges" />
    <path d={gridLines.major} stroke="#363e4a" shapeRendering="crispEdges" />
    <path d="M132.500 136v466" stroke="#1c6a22" shapeRendering="crispEdges" />
    <rect x="180" y="605" width="1140" height="1" fill="#7d2c36" />

    <g fill="none" stroke="#d8dade" strokeWidth="1.300">
      <circle cx={C.x} cy={C.y} r="159.500" />
      <circle cx={C.x} cy={C.y} r="142.300" />
      <circle cx={C.x} cy={C.y} r="136.500" />
      <circle cx={C.x} cy={C.y} r="126.300" />
      <circle cx={C.x} cy={C.y} r="106.500" />
      <circle cx={C.x} cy={C.y} r="96.500" />
      <circle cx={C.x} cy={C.y} r="74" />
      <path d={ballArcs} />
      {Array.from({ length: 10 }, (_, k) => {
        const a = (k * Math.PI) / 5;
        return <circle key={k} cx={C.x + 117 * Math.cos(a)} cy={C.y + 117 * Math.sin(a)} r="3" />;
      })}
      <rect x="709" y="308.500" width="63.500" height="319" rx="6" />
      <path d="M308 171v297M626.500 171v297M394 235v233M541.500 235v233M444.500 272v80M490.500 272v80" />
      <path d="M308 172.500h134M491 172.500h135M394 236.500h53M487 236.500h54M420 273.500h25M490 273.500h25M325 468.500h23M354 468.500h24" />
      <path d="M686 402.500h23M773 402.500h24M771 311l18-16h8" />
    </g>
    <path d="M766 314h2" stroke="#fff" />

    <g fill="none" stroke="#dcdee2" strokeWidth="1.300">
      <path d="M937 308.500h52a6 6 0 016 6v11h-5.500v6H937v-6h-6v-11a6 6 0 016-6z" fill="url(#hatch)" />
      <path d="M931 371.500h64v17a6 6 0 01-6 6h-52a6 6 0 01-6-6z" fill="url(#hatch)" />
      <path d="M931 325v47M995 325v47M936.500 331v40M989.500 331v40" />
      <path d="M937.500 341.500h6v20h-6zM984 341.500h6v20h-6z" fill="url(#hatch)" />
      <circle cx="963.500" cy="351.500" r="23" fill="#1f2631" />
      <circle cx="963.500" cy="351.500" r="23" fill="url(#hatch)" />
      <path d="M931 388v160M937.500 394v148M989.500 394v148M995 388v160" />
      <path d="M937 542.500h52a6 6 0 016 6v17h-64v-17a6 6 0 016-6z" fill="url(#hatch)" />
      <path d="M931 609.500h5.500v-5h53v5h5.500v12a6 6 0 01-6 6h-52a6 6 0 01-6-6z" fill="url(#hatch)" />
      <path d="M931 565v45M995 565v45M936.500 565v40M989.500 565v40" />
      <path d="M937.500 574.500h6v20h-6zM984 574.500h6v20h-6z" fill="url(#hatch)" />
      <circle cx="963.500" cy="584.500" r="23" fill="#1f2631" />
      <circle cx="963.500" cy="584.500" r="23" fill="url(#hatch)" />
      <path d="M967 325.500h51M995 371l20-12h10" />
      <path d="M917 318v24M914 341.500h27M917 361v24M914 361.500h27M896.500 348v23M895 371.500h36M896.500 394v24M895 394.500h36" />
    </g>

    <g stroke="#22a922" strokeWidth="1.400" fill="none">
      <path d="M467 394v148" strokeDasharray="24 3 4 3" strokeDashoffset="6" />
      <path d="M394 468.500h148" strokeDasharray="24 3 4 3" strokeDashoffset="6" />
      <path d="M676 468.500h135M896 468.500h135" strokeDasharray="20 3 4 3" />
    </g>

    <Arrow x={308} y={172.5} dir="l" n={13} /><Arrow x={626.5} y={172.5} dir="r" n={13} />
    <Arrow x={394} y={236.5} dir="l" /><Arrow x={541.5} y={236.5} dir="r" />
    <Arrow x={444.5} y={273.5} dir="r" /><Arrow x={490.5} y={273.5} dir="l" />
    <Arrow x={347} y={468.5} dir="r" /><Arrow x={355} y={468.5} dir="l" />
    <Arrow x={709} y={402.5} dir="r" /><Arrow x={772.5} y={402.5} dir="l" />
    <Arrow x={988} y={325.5} dir="r" n={11} /><Arrow x={996} y={325.5} dir="l" n={11} />
    <Arrow x={917} y={341} dir="d" /><Arrow x={917} y={362} dir="u" />
    <Arrow x={896.5} y={371} dir="d" /><Arrow x={896.5} y={395} dir="u" />
    <path d="M771 311l6-9 4 4zM995 371l8-8 3 5z" fill="#fff" />

    <Dim x={441} y={178}>110.00</Dim>
    <Dim x={446} y={242}>50.96</Dim>
    <Dim x={446} y={279}>15.90</Dim>
    <Dim x={375} y={474}>2.00</Dim>
    <Dim x={797} y={301}>R2.00</Dim>
    <Dim x={720} y={408}>21.90</Dim>
    <Dim x={1016} y={333}>1.90</Dim>
    <Dim x={1024} y={366}>R0.50</Dim>
    <Dim x={900} y={358}>6.90</Dim>
    <Dim x={880} y={389}>7.90</Dim>

    <g fill="none" stroke="#e8e8e8" strokeWidth="1.200">
      <path d="M131.500 559v46M131.500 606h48M128 601.500h8v8h-8zM133 543l6 6 6-6M139 549v6M183 593l11 11M194 593l-11 11" />
      <path d="M954 191.500h29M989 191.500h30M986.500 159v30M986.500 194v30M983.500 188.500h6v6h-6z" />
    </g>
  </DrawingSvg>
);

/* ---------- viewport ---------- */

const Workspace = styled.main`
  display: flex;
  flex: 1;
  min-height: 538px;
`;

const Canvas = styled.section`
  position: relative;
  flex: 1;
  min-width: 0;
  overflow: hidden;
  background: #202732;
`;

const ScrollStrip = styled.div`
  width: 8px;
  background: linear-gradient(#dfeaf6, #e9f1fa 15%, #b4cbe3 17%, #c0d6ec);
  border: 1px solid #2b3a4c;
  border-width: 0 2px 0 1px;
`;

const ViewportControls = styled.div`
  position: absolute;
  top: 7px;
  left: 3px;
  display: flex;
`;

const WindowControls = styled.div`
  position: absolute;
  top: 7px;
  right: 5px;
  display: flex;
`;

const WindowButton = styled.button`
  display: flex;
  align-items: center;
  justify-content: center;
  width: 19px;
  height: 16px;
`;

const Compass = styled.div`
  position: absolute;
  top: 34px;
  right: 12px;
`;

const WcsButton = styled.button`
  position: absolute;
  top: 152px;
  right: 41px;
  display: flex;
  align-items: center;
  gap: 6px;
  width: 45px;
  height: 16px;
  padding-left: 4px;
  border-radius: 4px;
  background: #a0a4ae;
  border: 1px solid #b4b8c0;
  color: #686d78;
  font-family: "Liberation Sans", Arial, sans-serif;
  font-size: 9px;
`;

const NavBar = styled.nav`
  position: absolute;
  top: 192px;
  right: 3px;
  display: flex;
  width: 30px;
  height: 199px;
  border-radius: 4px;
  background: #5a6069;
`;

const CommandBar = styled.form`
  position: absolute;
  left: 0;
  bottom: 1px;
  display: flex;
  align-items: center;
  width: 702px;
  max-width: 100%;
  height: 24px;
  background: #bdbec3;
`;

const CommandHandle = styled.div`
  display: flex;
  align-items: center;
  gap: 7px;
  width: 51px;
  height: 24px;
  padding-left: 3px;
  background: linear-gradient(#5e6062, #3a3c3e);
`;

const PromptButton = styled.button`
  display: flex;
  align-items: center;
  gap: 3px;
  margin-left: 4px;
`;

const CommandInput = styled.input`
  flex: 1;
  min-width: 0;
  height: 24px;
  padding: 0 7px;
  background: transparent;
  border: 0;
  font-family: "Liberation Mono", monospace;
  font-size: 11px;
  font-style: italic;
  color: #333;
  &::placeholder { color: #74767c; opacity: 1; }
`;

const ExpandButton = styled.button`
  display: flex;
  width: 14px;
  justify-content: center;
  transform: rotate(180deg);
`;

const CompassArt = () => (
  <svg width="100" height="104" viewBox="0 0 100 104" aria-label="View cube" role="img">
    <circle cx="50" cy="51" r="40" fill="none" stroke="#4b505b" strokeWidth="10" />
    <path d="M30 32h39v39H30z" fill="#b9babd" stroke="#8d8f94" />
    <path d="M38 40h23v23H38z" fill="#a9b0b3" />
    <g fontFamily="'Liberation Sans', Arial, sans-serif" fontWeight="700" fill="#babdc4" textAnchor="middle">
      <text x="50" y="15" fontSize="16">N</text>
      <text x="50" y="99" fontSize="16">S</text>
      <text x="8" y="57" fontSize="16">W</text>
      <text x="92" y="57" fontSize="16">E</text>
      <text x="50" y="55" fontSize="9" fill="#3f444b">TOP</text>
    </g>
  </svg>
);

const NavArt = () => (
  <svg width="30" height="199" viewBox="0 0 30 199" aria-hidden="true" fill="none" stroke="#3f444c" strokeWidth="1">
    <circle cx="24" cy="5" r="3" /><path d="M22 5h4" />
    <circle cx="15" cy="28" r="10" /><circle cx="15" cy="28" r="5" /><path d="M15 18h10v10" />
    <path d="M13 46h4M13 112h4M13 148h4" strokeWidth="1.500" />
    <path d="M9 76l-5-7 2-1 5 4-2-12 2-1 3 9V58h2l1 10 2-9h2l-1 10 4-7 1 1-4 14-3 2H12z" />
    <path d="M4 85l12 12M16 85L4 97M3 84h4v3H3zM14 84h4v3h-4zM3 95h4v3H3z" />
    <circle cx="19" cy="97" r="4" /><path d="M22 100l4 6" strokeWidth="2" />
    <path d="M13 122h4v17h-4z" /><ellipse cx="15" cy="131" rx="10" ry="4" /><path d="M9 132l-4-4M9 132l-4 3" />
    <path d="M4 160h6v5H4zM12 160h5v5h-5zM19 160h6v5h-6zM4 168h14v12H4zM8 171l6 3-6 3z" />
    <circle cx="24" cy="193" r="3" /><path d="M22 193h4" />
  </svg>
);

const ViewportView = () => (
  <Workspace>
    <Canvas>
      <Drawing />
      <ViewportControls><button>[−]</button><button>[Top]</button><button>[2D Wireframe]</button></ViewportControls>
      <WindowControls>
        <WindowButton aria-label="Minimize"><svg width="12" height="12"><path d="M2 8h9v3H2z" fill="#fff" /></svg></WindowButton>
        <WindowButton aria-label="Restore"><svg width="12" height="12"><path d="M4 4V2h7v6H8M1.500 4.500h6v6h-6z" fill="none" stroke="#fff" strokeWidth="1.500" /></svg></WindowButton>
        <WindowButton aria-label="Close"><svg width="12" height="12"><path d="M2 3l7 7M9 3l-7 7" stroke="#fff" strokeWidth="2" /></svg></WindowButton>
      </WindowControls>
      <Compass><CompassArt /></Compass>
      <WcsButton>WCS<Tri size={7} color="#b8bcc4" /></WcsButton>
      <NavBar aria-label="Navigation bar"><button aria-label="Navigate"><NavArt /></button></NavBar>
      <CommandBar onSubmit={(e) => e.preventDefault()}>
        <CommandHandle>
          <svg width="5" height="18" aria-hidden="true"><path d="M1 0v18M4 0v18" stroke="#aaa" strokeDasharray="1 2" /></svg>
          <button type="button" aria-label="Close command line"><svg width="11" height="11" viewBox="0 0 16 16">{art.x}</svg></button>
          <button type="button" aria-label="Customize"><Icon name="wrench" size={14} /></button>
        </CommandHandle>
        <PromptButton type="button" aria-label="Recent commands"><Icon name="prompt" size={14} /><Tri size={5} color="#555" /></PromptButton>
        <CommandInput aria-label="Command" placeholder="Type a command" />
        <ExpandButton type="button" aria-label="History"><Tri color="#111" /></ExpandButton>
      </CommandBar>
    </Canvas>
    <ScrollStrip />
  </Workspace>
);

/* ---------- bottom bars ---------- */

const LayoutTabs = styled.nav`
  display: flex;
  height: 20px;
  padding-left: 10px;
  background: #383838;
`;

const LayoutTab = styled.button<{ $active?: boolean; $small?: boolean }>`
  width: ${(p) => (p.$small ? 24 : p.$active ? 56 : 60)}px;
  height: ${(p) => (p.$small ? 16 : 17)}px;
  color: ${(p) => (p.$active ? "#fff" : "#b8b8b8")};
  font-size: ${(p) => (p.$small ? 14 : 11)}px;
  font-weight: ${(p) => (p.$active || p.$small ? 700 : 400)};
  background: ${(p) => (p.$active ? "linear-gradient(#5c5c5c, #8c8c8c)" : "#555")};
  clip-path: polygon(0 0, 100% 0, calc(100% - 3px) 70%, calc(100% - 9px) 100%, 9px 100%, 4px 70%);
`;

const StatusBar = styled.footer`
  display: flex;
  justify-content: flex-end;
  gap: 2px;
  height: 26px;
  background: #383838;
  border-bottom: 2px solid #c3d0de;
  white-space: nowrap;
`;

const StatusGroup = styled.div`
  display: flex;
  height: 24px;
  background: #4c4c4c;
  border: 1px solid #777;
`;

const StatusCell = styled.div`
  display: flex;
  align-items: center;
  & + & { border-left: 1px solid #777; }
`;

const CoordCell = styled(StatusCell)`
  justify-content: flex-end;
  width: 167px;
  padding-right: 3px;
  color: #b4b4b4;
`;

const StatusButton = styled.button<{ $w?: number; $on?: boolean }>`
  display: flex;
  align-items: center;
  justify-content: center;
  width: ${(p) => p.$w ?? 22}px;
  height: 22px;
  color: ${(p) => (p.$on ? "#2f8df2" : "#cfcfcf")};
`;

const StatusText = styled.button<{ $w: number }>`
  width: ${(p) => p.$w}px;
  height: 22px;
  color: #f0f0f0;
`;

const statusGroups: string[][][] = [
  [["dgrid", "dots", "v"]],
  [["infer"], ["dyn"], ["ortho", "polar", "v", "iso", "v"], ["otrack", "osnap", "v"], ["lwt"], ["transp"], ["cycle"], ["cubeSnap", "v"]],
  [["dynUcs", "cube", "v", "gizmoS", "v"]],
  [["personB", "personF", "person", "1:1 / 100%", "v"]],
  [["gear", "v"], ["plus"]],
  [["ruler", "Decimal", "v"], ["calc"]],
  [["lock", "v"], ["shapes"]],
  [["perf"]],
  [["full", "burger"]],
];
const textItems: Record<string, number> = { "1:1 / 100%": 62, Decimal: 54 };
const wideItems = ["ortho", "polar", "otrack"];

const StatusItem = ({ name }: { name: string }) => {
  if (name === "v") return <StatusButton $w={14} aria-label="Options"><Tri size={7} /></StatusButton>;
  if (textItems[name]) return <StatusText $w={textItems[name]}>{name}</StatusText>;
  return (
    <StatusButton $w={wideItems.includes(name) ? 23 : 22} $on={name === "personB"} aria-label={name}>
      <Icon name={name} />
    </StatusButton>
  );
};

const tabs = ["Home", "Solid", "Surface", "Mesh", "Visualize", "Parametric", "Insert", "Annotate", "View", "Manage", "Output", "Add-ins", "A360", "Featured Apps", "BIM 360", "Performance", "Express Tools"];

export default function App() {
  return (
    <Shell>
      <GlobalStyle />
      <Header>
        <LogoButton aria-label="Application menu">
          <svg width="22" height="24" viewBox="0 0 22 24" aria-hidden="true">
            <path d="M11 0L0 23l6-3 2-4h6l2 4 6 3z" fill="#c81e1e" />
            <path d="M11 0L0 23l6-3 5-12z" fill="#e0332c" />
            <path d="M11 9l-2 5h4z" fill="#7d0f10" />
            <path d="M14 16l2 4 6 3-4-8z" fill="#8f1214" />
          </svg>
          <Tri size={6} color="#222" />
        </LogoButton>
        <HeaderMain>
          <TitleBar>
            <QuickAccess>
              {["new", "open", "save", "saveas", "plot", "undo"].map((n) => <ToolButton key={n} aria-label={n}><Icon name={n} size={15} /></ToolButton>)}
              <ToolButton $w={12} aria-label="Undo list"><Tri size={5} /></ToolButton>
              <ToolButton aria-label="Redo"><Icon name="redo" size={15} /></ToolButton>
              <ToolButton $w={12} aria-label="Redo list"><Tri size={5} /></ToolButton>
              <ToolButton $w={16} aria-label="Customize toolbar"><Icon name="custom" size={12} /></ToolButton>
            </QuickAccess>
            <Title>{"Autodesk AutoCAD 2016    Drawing1.dwg"}</Title>
            <ToolButton $w={13} aria-label="Toggle search"><svg width="4" height="7"><path d="M0 0l4 3.500L0 7z" fill="#fff" /></svg></ToolButton>
            <SearchBox aria-label="Search" placeholder="Type a keyword or phrase" />
            <TitleTools>
              <ToolButton aria-label="Find"><Icon name="binoc" size={15} /></ToolButton>
              <ToolButton $w={24} aria-label="Account"><Icon name="user" /></ToolButton>
              <SignIn>Sign In</SignIn>
              <ToolButton $w={10} aria-label="Account options"><Tri size={5} /></ToolButton>
              <ToolButton $w={24} aria-label="Exchange"><Icon name="exchange" size={14} /></ToolButton>
              <ToolButton aria-label="A360"><Icon name="a360" size={15} /></ToolButton>
              <ToolButton $w={10} aria-label="A360 options"><Tri size={5} /></ToolButton>
              <Separator />
              <ToolButton aria-label="Help"><Icon name="help" /></ToolButton>
              <ToolButton $w={12} aria-label="Help options"><Tri size={5} /></ToolButton>
              <WindowTools>
                <ToolButton $w={18} aria-label="Minimize"><Icon name="min" size={10} /></ToolButton>
                <ToolButton $w={14} aria-label="Restore"><Icon name="restore" size={14} /></ToolButton>
                <ToolButton $w={18} aria-label="Close"><Icon name="close" size={12} /></ToolButton>
              </WindowTools>
            </TitleTools>
          </TitleBar>
          <TabBar>
            {tabs.map((t, i) => <Tab key={t} $active={i === 0}>{t}</Tab>)}
            <CollapseButton aria-label="Minimize ribbon">
              <svg width="13" height="8" aria-hidden="true"><rect width="13" height="8" rx="2" fill="#eee" /><path d="M4 6l2.500-3L9 6z" fill="#333" /></svg>
              <Tri size={5} />
            </CollapseButton>
          </TabBar>
        </HeaderMain>
      </Header>
      <RibbonView />
      <ViewportView />
      <LayoutTabs>
        <LayoutTab $active>Model</LayoutTab>
        <LayoutTab>Layout1</LayoutTab>
        <LayoutTab>Layout2</LayoutTab>
        <LayoutTab $small aria-label="New layout">+</LayoutTab>
      </LayoutTabs>
      <StatusBar>
        <StatusGroup><CoordCell>366.5634, 87.8755, 0.0000</CoordCell></StatusGroup>
        <StatusGroup><StatusCell><StatusText $w={43}>MODEL</StatusText></StatusCell></StatusGroup>
        {statusGroups.map((g, i) => (
          <StatusGroup key={i}>
            {g.map((cell, j) => (
              <StatusCell key={j}>{cell.map((n, k) => <StatusItem key={k} name={n} />)}</StatusCell>
            ))}
          </StatusGroup>
        ))}
      </StatusBar>
    </Shell>
  );
}
